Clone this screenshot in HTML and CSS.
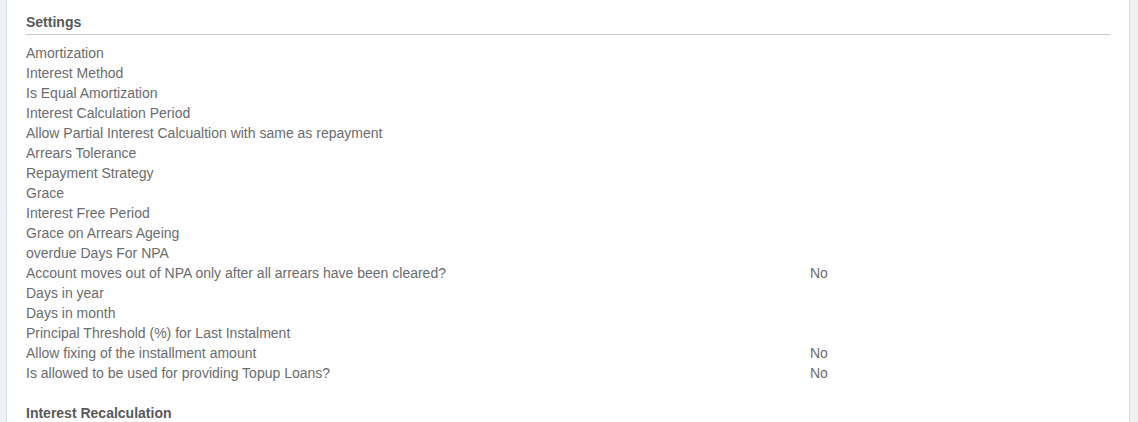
FILE: index.html
```html
<!DOCTYPE html>
<html lang="en">
<head>
  <meta charset="UTF-8" />
  <title>Loan Product - Settings</title>
  <link rel="stylesheet" href="styles.css">
</head>
<body>
  <div class="card">
    <!-- SETTINGS -->
    <div class="section">
      <h4 class="section-title">Settings</h4>
      <div class="rows">
        <div class="row"><span class="label">Amortization</span><span class="value"></span></div>
        <div class="row"><span class="label">Interest Method</span><span class="value"></span></div>
        <div class="row"><span class="label">Is Equal Amortization</span><span class="value"></span></div>
        <div class="row"><span class="label">Interest Calculation Period</span><span class="value"></span></div>
        <div class="row"><span class="label">Allow Partial Interest Calcualtion with same as repayment</span><span class="value"></span></div>
        <div class="row"><span class="label">Arrears Tolerance</span><span class="value"></span></div>
        <div class="row"><span class="label">Repayment Strategy</span><span class="value"></span></div>
        <div class="row"><span class="label">Grace</span><span class="value"></span></div>
        <div class="row"><span class="label">Interest Free Period</span><span class="value"></span></div>
        <div class="row"><span class="label">Grace on Arrears Ageing</span><span class="value"></span></div>
        <div class="row"><span class="label">overdue Days For NPA</span><span class="value"></span></div>
        <div class="row"><span class="label">Account moves out of NPA only after all arrears have been cleared?</span><span class="value">No</span></div>
        <div class="row"><span class="label">Days in year</span><span class="value"></span></div>
        <div class="row"><span class="label">Days in month</span><span class="value"></span></div>
        <div class="row"><span class="label">Principal Threshold (%) for Last Instalment</span><span class="value"></span></div>
        <div class="row"><span class="label">Allow fixing of the installment amount</span><span class="value">No</span></div>
        <div class="row"><span class="label">Is allowed to be used for providing Topup Loans?</span><span class="value">No</span></div>
      </div>
    </div>

    <!-- INTEREST RECALCULATION -->
    <div class="section">
      <h4 class="section-title plain">Interest Recalculation</h4>
    </div>
  </div>
</body>
</html>
```

FILE: styles.css
```css
:root {
  --page-bg: #eef1f4;
  --card-bg: #ffffff;
  --card-border: #dcdfe3;
  --heading: #58595b;
  --text: #6a6c6f;
  --rule: #c8c8c8;
}

body {
  margin: 0;
  background: var(--page-bg);
  font-family: 'Liberation Sans', Arial, sans-serif;
  font-size: 14px;
  line-height: 20px;
  color: var(--text);
}

.card {
  margin-left: 6px;
  width: 1084px;
  min-height: 430px;
  padding: 12px 19px 0 19px;
  background: var(--card-bg);
  border-left: 1px solid var(--card-border);
  border-right: 1px solid var(--card-border);
}

.section {
  margin-bottom: 20px;
}

.section-title {
  margin: 0;
  font-size: 14px;
  font-weight: bold;
  color: var(--heading);
  padding-bottom: 2px;
  border-bottom: 1px solid var(--rule);
}

.section-title.plain {
  border-bottom: none;
}

.rows {
  margin-top: 8px;
}

.row {
  display: grid;
  grid-template-columns: 784px 1fr;
  height: 20px;
}
```
